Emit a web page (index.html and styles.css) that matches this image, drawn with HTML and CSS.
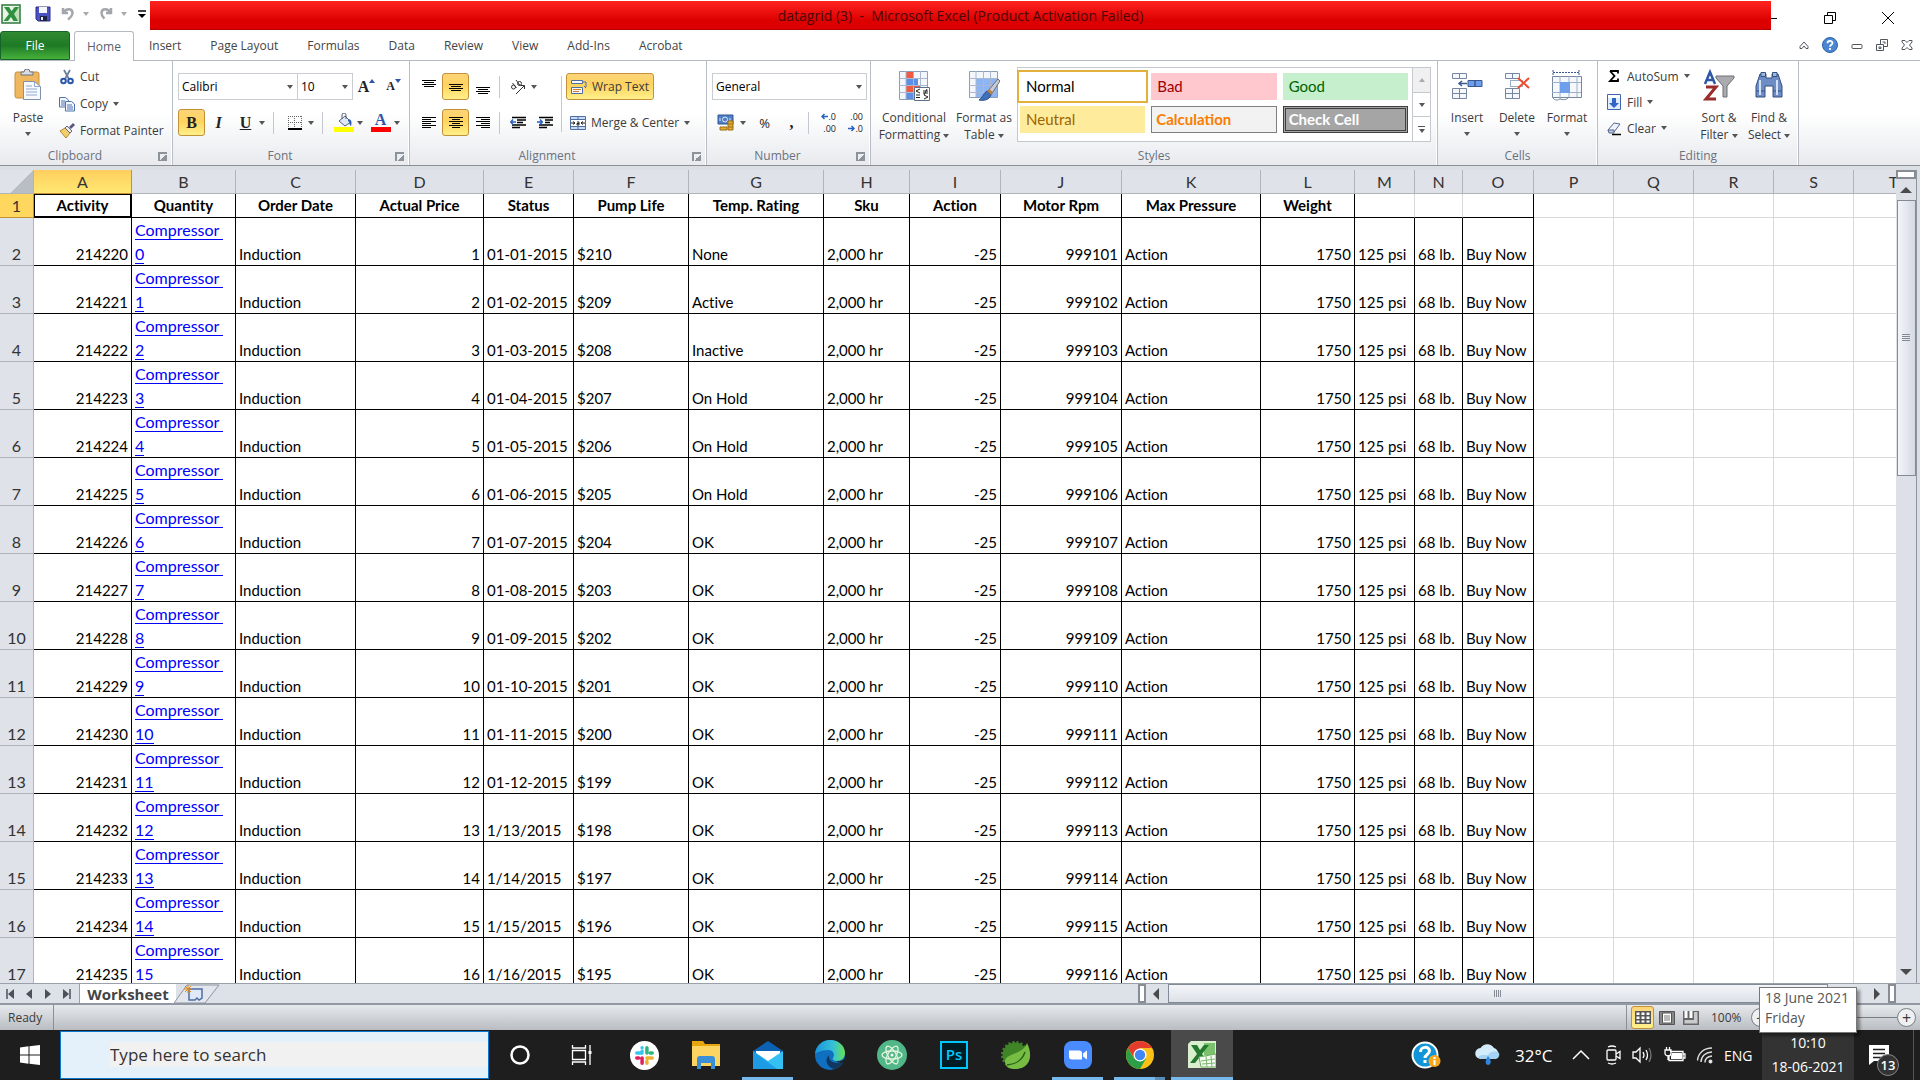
FILE: index.html
```html
<!DOCTYPE html>
<html lang="en">
<head>
<meta charset="utf-8">
<title>datagrid (3) - Microsoft Excel</title>
<link rel="stylesheet" href="styles.css">
</head>
<body>
<header class="titlebar">
  <div class="quick">
    <svg width="20" height="20" viewBox="0 0 20 20"><rect x="1" y="1" width="18" height="18" fill="#e9f4e6" stroke="#2c7a3c" stroke-width="1.5"/><path d="M12 3h6v14h-6z" fill="#bfe0b8"/><path d="M3 3h5l2.500 4L14 3h4l-5 7 4 7h-4.500L10 13l-3 4H2.500L8 10z" fill="#2f9140"/></svg>
    <span class="qsep"></span>
    <button class="plain" aria-label="Save"><svg width="16" height="16" viewBox="0 0 16 16"><path d="M1 1h14v14H3l-2-2z" fill="#4b53c4" stroke="#2a2f84"/><path d="M4 1h8v6H4z" fill="#f4f6fc"/><path d="M5 10h7v5H5z" fill="#1e2247"/><path d="M6 11h2v3H6z" fill="#e8ebf5"/></svg></button>
    <button class="plain" aria-label="Undo"><svg width="16" height="16" viewBox="0 0 16 16" fill="none" stroke="#a3a6ab" stroke-width="2.500"><path d="M3 2v5h5M3.500 6.500C6 2 12 2 12.500 6.500c.3 3-2 5-4.500 7"/></svg></button>
    <span class="caret pale"></span>
    <button class="plain" aria-label="Redo"><svg width="16" height="16" viewBox="0 0 16 16" fill="none" stroke="#a3a6ab" stroke-width="2.500"><path d="M13 2v5H8M12.500 6.500C10 2 4 2 3.500 6.500c-.3 3 1 4 3 6"/></svg></button>
    <span class="caret pale"></span>
    <span class="qsep"></span>
    <button class="plain more" aria-label="Customize toolbar"><svg width="8" height="8" viewBox="0 0 8 8"><path d="M0 1h8" stroke="#000" stroke-width="1.500"/><path d="M0 4h8L4 8z"/></svg></button>
  </div>
  <h1 class="title">datagrid (3) &nbsp;-&nbsp; Microsoft Excel (Product Activation Failed)</h1>
  <div class="winbtns">
    <button class="plain" aria-label="Minimize"><svg width="6" height="12" viewBox="0 0 6 12"><path d="M0 6.500h6" stroke="#000"/></svg></button>
    <button class="plain" aria-label="Restore"><svg width="12" height="12" viewBox="0 0 12 12" fill="none" stroke="#000"><path d="M.5 3.500h8v8h-8zM3.500 3V.5h8v8H9"/></svg></button>
    <button class="plain" aria-label="Close"><svg width="12" height="12" viewBox="0 0 12 12" stroke="#000" fill="none"><path d="M0 0l12 12M12 0L0 12"/></svg></button>
  </div>
</header>
<nav class="tabs">
  <button class="file">File</button>
  <button class="tab on">Home</button><button class="tab">Insert</button><button class="tab">Page Layout</button><button class="tab">Formulas</button><button class="tab">Data</button><button class="tab">Review</button><button class="tab">View</button><button class="tab">Add-Ins</button><button class="tab">Acrobat</button>
  <div class="tabtools">
    <button class="plain" aria-label="Collapse ribbon"><svg width="10" height="10" viewBox="0 0 10 10" fill="none" stroke="#50565e"><path d="M1 6.500L5 2l4 4.500v2H7L5 6 3 8.500H1z"/></svg></button>
    <button class="plain" aria-label="Help"><svg width="16" height="16" viewBox="0 0 16 16"><circle cx="8" cy="8" r="7.500" fill="#4a86d2" stroke="#2d62a8"/><path d="M5.500 6.200C5.500 3.300 10.500 3.300 10.500 6c0 1.700-2.500 1.900-2.500 3.800M8 11v2" fill="none" stroke="#fff" stroke-width="1.800"/></svg></button>
    <button class="plain" aria-label="Minimize workbook"><svg width="12" height="12" viewBox="0 0 12 12"><rect x="1" y="5.500" width="10" height="4" rx="1" fill="none" stroke="#50565e"/></svg></button>
    <button class="plain" aria-label="Restore workbook"><svg width="12" height="12" viewBox="0 0 12 12" fill="none" stroke="#50565e"><path d="M.5 5.500h7v6h-7zM3 8h2v1.500H3zM4.500 5V.5h7v7H8M6.500 3h2.500v2"/></svg></button>
    <button class="plain" aria-label="Close workbook"><svg width="12" height="12" viewBox="0 0 12 12" fill="none" stroke="#50565e"><path d="M1 1.500h3l2 2 2-2h3v1.500L8.500 6 11 9v1.500H8l-2-2-2 2H1V9l2.500-3L1 3z"/></svg></button>
  </div>
</nav>
<section class="ribbon">
  <div class="group clip">
    <div class="body">
      <button class="big"><svg width="32" height="32" viewBox="0 0 32 32"><rect x="3" y="3" width="24" height="26" rx="2" fill="#efb75f" stroke="#c98f3a"/><path d="M9 6h12V3h-3a3 3 0 00-6 0H9z" fill="#d9dde2" stroke="#6b737c"/><path d="M11.500 12.500h11l6 5v13h-17z" fill="#f6f9fe" stroke="#8091ab"/><path d="M22.500 12.500v5h6M14 17h6M14 20h11M14 23h11M14 26h11" fill="none" stroke="#8fa8cf"/></svg><span>Paste</span><span class="caret"></span></button>
      <div class="stack wide">
        <button class="small"><svg width="16" height="16" viewBox="0 0 16 16" fill="none"><path d="M5 1l5 9M11 1L6 10" stroke="#6d7f9c" stroke-width="1.800"/><circle cx="4.500" cy="12" r="2.300" stroke="#2856a8" stroke-width="2"/><circle cx="11.500" cy="12" r="2.300" stroke="#2856a8" stroke-width="2"/></svg>Cut</button>
        <button class="small"><svg width="16" height="16" viewBox="0 0 16 16" fill="#f3f7fd" stroke="#4f72ae"><path d="M.5 1.500h6l3 2.500v7h-9z"/><path d="M2 5h4M2 7h4M2 9h4"/><path d="M6.500 5.500h6l3 2.500v7h-9zM8 9h5M8 11h6M8 13h6"/></svg>Copy<span class="caret"></span></button>
        <button class="small"><svg width="16" height="16" viewBox="0 0 16 16"><path d="M1 8l5-3 5 5-4 5z" fill="#f2cf6b" stroke="#b08a30"/><path d="M6 5l2-2 5 5-2 2z" fill="#e9edf3" stroke="#667"/><path d="M10 4l4-4 2 2-4 4z" fill="#5a5582"/></svg>Format Painter</button>
      </div>
    </div>
    <h2 class="withlaunch">Clipboard</h2><span class="launch"></span>
  </div>
  <div class="group fontg">
    <div class="body rows">
      <div class="row">
        <span class="pick fname"><select aria-label="Font"><option>Calibri</option></select><span class="caret"></span></span><span class="pick fsize"><select aria-label="Font size"><option>10</option></select><span class="caret"></span></span>
        <button class="ib" aria-label="Grow font"><span class="serif">A</span><span class="sup up"></span></button>
        <button class="ib" aria-label="Shrink font"><span class="serif sm">A</span><span class="sup dn"></span></button>
      </div>
      <div class="row">
        <button class="ib on serif">B</button>
        <button class="ib serif"><i>I</i></button>
        <button class="ib serif"><u>U</u></button><span class="caret"></span>
        <span class="vsep"></span>
        <button class="ib" aria-label="Borders"><svg width="14" height="14" viewBox="0 0 14 14" fill="none" stroke="#666" stroke-dasharray="1 1"><path d="M.5 0v12M6.500 0v12M13.500 0v12M0 .5h14M0 6.500h14"/><path d="M0 13h14" stroke="#000" stroke-width="2" stroke-dasharray="none"/></svg></button><span class="caret"></span>
        <span class="vsep"></span>
        <button class="ib" aria-label="Fill color"><svg width="20" height="20" viewBox="0 0 20 20"><path d="M5 8l6-5 6 6-6 4z" fill="#dfe8f6" stroke="#53627c"/><path d="M8 6V2a2 2 0 014 0v4" fill="none" stroke="#53627c"/><path d="M14 6c4 0 4 4 3 7-2-1-1-4-3-5z" fill="#2b5fb4"/><path d="M0 14h20v5H0z" fill="#ff0"/></svg></button><span class="caret gap"></span>
        <button class="ib" aria-label="Font color"><span class="fcolor">A</span></button><span class="caret"></span>
      </div>
    </div>
    <h2 class="withlaunch">Font</h2><span class="launch"></span>
  </div>
  <div class="group align">
    <div class="body">
      <div class="rows">
        <div class="row">
          <button class="ib" aria-label="Top align"><svg width="14" height="14" viewBox="0 0 14 14" stroke="#000"><path d="M0 .5h14M2 2.500h10M0 4.500h14M2 6.500h10"/></svg></button>
          <button class="ib on" aria-label="Middle align"><svg width="14" height="14" viewBox="0 0 14 14" stroke="#000"><path d="M0 4.500h14M2 6.500h10M0 8.500h14M2 10.500h10"/></svg></button>
          <button class="ib" aria-label="Bottom align"><svg width="14" height="14" viewBox="0 0 14 14" stroke="#000"><path d="M0 7.500h14M2 9.500h10M0 11.500h14M2 13.500h10"/></svg></button>
          <span class="vsep tight"></span>
          <button class="ib" aria-label="Orientation"><svg width="16" height="16" viewBox="0 0 16 16" fill="none" stroke="#333"><circle cx="3.500" cy="8" r="2"/><path d="M2.500 4l4 5M6 1l4.500 6M6 15l8-8M11 6.500h3.500V10"/><circle cx="9.500" cy="4.500" r="2"/></svg></button><span class="caret"></span>
        </div>
        <div class="row">
          <button class="ib" aria-label="Align left"><svg width="14" height="14" viewBox="0 0 14 14" stroke="#000"><path d="M0 1.500h14M0 3.500h9M0 5.500h14M0 7.500h9M0 9.500h14M0 11.500h9"/></svg></button>
          <button class="ib on" aria-label="Center"><svg width="14" height="14" viewBox="0 0 14 14" stroke="#000"><path d="M0 1.500h14M3 3.500h8M0 5.500h14M3 7.500h8M0 9.500h14M3 11.500h8"/></svg></button>
          <button class="ib" aria-label="Align right"><svg width="14" height="14" viewBox="0 0 14 14" stroke="#000"><path d="M0 1.500h14M5 3.500h9M0 5.500h14M5 7.500h9M0 9.500h14M5 11.500h9"/></svg></button>
          <span class="vsep tight"></span>
          <button class="ib" aria-label="Decrease indent"><svg width="16" height="14" viewBox="0 0 16 14" stroke="#000" fill="none"><path d="M2 1.500h14M7 4h9M7 6.500h6M2 9h14M2 11.500h8" stroke-width="1.500"/><path d="M6 6H1M3 3.500L.7 6 3 8.500" stroke="#2860c0" stroke-width="1.500"/></svg></button>
          <button class="ib" aria-label="Increase indent"><svg width="16" height="14" viewBox="0 0 16 14" stroke="#000" fill="none"><path d="M2 1.500h14M8 4h8M8 6.500h5M2 9h14M2 11.500h8" stroke-width="1.500"/><path d="M0 6h5M3 3.500L5.300 6 3 8.500" stroke="#2860c0" stroke-width="1.500"/></svg></button>
        </div>
      </div>
      <span class="vsep tall"></span>
      <div class="rows">
        <button class="small on"><svg width="16" height="16" viewBox="0 0 16 16"><path d="M.5 1.500h11v3H.5zM.5 8.500h11v6H.5z" fill="#f8fafd" stroke="#4e6da1"/><path d="M2 10.500h8M2 12.500h6" stroke="#d07a2c"/><path d="M12 3h3v5M13 7l2 2" fill="none" stroke="#4e6da1"/></svg>Wrap Text</button>
        <button class="small"><svg width="16" height="16" viewBox="0 0 16 16"><path d="M.5 1.500h15v13H.5z" fill="#c8daf3" stroke="#4e6da1"/><path d="M1 5h14v6H1z" fill="#fff"/><path d="M1 4.500h14M1 11.500h14M8 2v2M8 12v2" stroke="#4e6da1"/><path d="M1 8h4M3 6.500L5 8 3 9.500M15 8h-4M13 6.500L11 8l2 1.500M7 7h2v3H7V8.500h2" fill="none" stroke="#222"/></svg>Merge &amp; Center<span class="caret"></span></button>
      </div>
    </div>
    <h2 class="withlaunch">Alignment</h2><span class="launch"></span>
  </div>
  <div class="group number">
    <div class="body rows">
      <div class="row"><span class="pick fmt"><select aria-label="Number format"><option>General</option></select><span class="caret"></span></span></div>
      <div class="row">
        <button class="ib" aria-label="Accounting format"><svg width="18" height="18" viewBox="0 0 18 18"><path d="M1 1h15v9H1z" fill="#4f7fc4" stroke="#2f5795"/><circle cx="8" cy="5.500" r="2.500" fill="none" stroke="#dbe8f8"/><path d="M3 4v3M13 4v3" stroke="#dbe8f8"/><path d="M11 7h5v9h-5zM3 13h7v3H3z" fill="#e3ac36" stroke="#9a6f16"/><path d="M11 10h5M11 13h5" stroke="#9a6f16"/></svg></button><span class="caret"></span>
        <button class="ib pct">%</button>
        <button class="ib serif">,</button>
        <span class="vsep tight"></span>
        <button class="ib dec" aria-label="Increase decimal"><span><svg width="7" height="7" viewBox="0 0 7 7"><path d="M7 3.500H1M3.500 1L1 3.500 3.500 6" fill="none" stroke="#2860c0" stroke-width="1.500"/></svg>.0</span><span>.00</span></button>
        <button class="ib dec" aria-label="Decrease decimal"><span>.00</span><span><svg width="7" height="7" viewBox="0 0 7 7"><path d="M0 3.500h6M3.500 1L6 3.500 3.500 6" fill="none" stroke="#2860c0" stroke-width="1.500"/></svg>.0</span></button>
      </div>
    </div>
    <h2 class="withlaunch">Number</h2><span class="launch"></span>
  </div>
  <div class="group styles">
    <div class="body">
      <button class="big w76"><svg width="32" height="32" viewBox="0 0 32 32"><path d="M1.500 2.500h28v28h-28z" fill="#f3f6fb" stroke="#8b9dbb"/><path d="M8 3h7v6H8zM8 17h14v6H8z" fill="#ef5a41"/><path d="M8 10h12v6H8zM8 24h7v6H8z" fill="#5d8fe6"/><path d="M8 2v28M15.500 2v28M22.500 2v28M1 9.500h28M1 16.500h28M1 23.500h28" stroke="#a9b8d0"/><path d="M16.500 18.500h15v13h-15z" fill="#fff" stroke="#5e6f8c"/><path d="M22 20l-4 2 4 2M18 26h4M18 28.500h4M25 22h5M25 24h5M29 20l-3 6M26 26l4 2-4 2" fill="none" stroke="#222"/></svg><span>Conditional</span><span>Formatting <i class="caret"></i></span></button>
      <button class="big w64"><svg width="32" height="32" viewBox="0 0 32 32"><path d="M1.500 2.500h28v26h-28z" fill="#f3f6fb" stroke="#8b9dbb"/><path d="M8 9h21v19H8z" fill="#8db4f3"/><path d="M8 2v26M15.500 2v26M22.500 2v26M1 9.500h28M1 16.500h28M1 23.500h28" stroke="#a9b8d0"/><path d="M30 10l2 2-9 14-4-3z" fill="#c9ccd2" stroke="#6b7078"/><path d="M19 22l4 4c-2 5-7 6-12 5 4-2 4-7 8-9z" fill="#3e70bd" stroke="#2a4f8a"/><path d="M21 20l4 3-2 3-4-4z" fill="#b58148"/></svg><span>Format as</span><span>Table <i class="caret"></i></span></button>
      <div class="gallery">
        <div class="swatches">
          <button class="sw normal">Normal</button><button class="sw bad">Bad</button><button class="sw good">Good</button>
          <button class="sw neutral">Neutral</button><button class="sw calc">Calculation</button><button class="sw check">Check Cell</button>
        </div>
        <div class="scroller"><button class="dim" aria-label="Up"><span class="caret flip pale"></span></button><button aria-label="Down"><span class="caret"></span></button><button class="bar" aria-label="More styles"><span class="caret"></span></button></div>
      </div>
    </div>
    <h2>Styles</h2>
  </div>
  <div class="group cells">
    <div class="body">
      <button class="big w50"><svg width="32" height="32" viewBox="0 0 32 32"><g fill="#f5f8fc" stroke="#76879f"><path d="M1.500 4.500h14v5h-14zM8.500 4.500v5M1.500 19.500h14v10h-14zM8.500 19.500v10M1.500 24.500h14"/></g><path d="M17 11.500h14v6H17z" fill="#6f9eea" stroke="#39588f"/><path d="M24 12v5M16 14.500H8M11 12l-3 2.500 3 2.500" fill="none" stroke="#39588f" stroke-width="1.500"/></svg><span>Insert</span><span class="caret"></span></button>
      <button class="big w50"><svg width="32" height="32" viewBox="0 0 32 32"><g fill="#f5f8fc" stroke="#76879f"><path d="M4.500 4.500h14v5h-14zM11.500 4.500v5M4.500 19.500h14v10h-14zM11.500 19.500v10M4.500 24.500h14"/></g><path d="M9.500 11.500h12v6h-12z" fill="none" stroke="#39588f" stroke-dasharray="1 1"/><path d="M17 9l11 10M28 9L17 19" stroke="#ee4a2b" stroke-width="2"/></svg><span>Delete</span><span class="caret"></span></button>
      <button class="big w50"><svg width="32" height="32" viewBox="0 0 32 32"><path d="M1.500 7.500h29v21h-29z" fill="#f5f8fc" stroke="#76879f"/><path d="M9 7v23M18 7v21M26 7v21M1 13.500h29M1 23.500h29" stroke="#9fb0c9"/><path d="M9 13h10v11H9z" fill="#6f9eea"/><path d="M2 3.500h26M2 1v5M28 1v5" stroke="#39588f" stroke-dasharray="2 1"/><path d="M2 29c2 3 5 2 7 1 3 1 6 1 8-1" fill="none" stroke="#76879f"/></svg><span>Format</span><span class="caret"></span></button>
    </div>
    <h2>Cells</h2>
  </div>
  <div class="group editing">
    <div class="body">
      <div class="stack">
        <button class="small"><svg width="16" height="16" viewBox="0 0 16 16"><path d="M4 3h8v2.500M4 3l4.500 5L4 13h8v-2.500" fill="none" stroke="#000" stroke-width="1.800"/></svg>AutoSum<span class="caret"></span></button>
        <button class="small"><svg width="16" height="16" viewBox="0 0 16 16"><path d="M1.500.5h13v15h-13z" fill="#e2ecfb" stroke="#3f67b0"/><path d="M2 1h12v3H2z" fill="#fff"/><path d="M6 4h4v5h3l-5 5-5-5h3z" fill="#2f66c8"/></svg>Fill<span class="caret"></span></button>
        <button class="small"><svg width="16" height="16" viewBox="0 0 16 16"><path d="M2 10l6-7 6 1-6 8H3z" fill="#eef2fa" stroke="#56698c"/><path d="M2 10l6 0v3H3z" fill="#b9c9e6" stroke="#56698c"/><path d="M6 14.500h9" stroke="#000" stroke-width="1.500"/></svg>Clear<span class="caret"></span></button>
      </div>
      <button class="big w50"><svg width="32" height="32" viewBox="0 0 32 32"><path d="M13 7h18v2l-7 8v11h-4V17l-7-8z" fill="#a9abae" stroke="#6d7074"/><path d="M2 15L7 3l5 12M4 11h6" fill="none" stroke="#2d57a6" stroke-width="2.500"/><path d="M3 18h10L3 30h10" fill="none" stroke="#9a2c2c" stroke-width="3"/></svg><span>Sort &amp;</span><span>Filter <i class="caret"></i></span></button>
      <button class="big w50"><svg width="32" height="32" viewBox="0 0 32 32"><path d="M7 5h6v4h6V5h6l4 12v11h-9V17h-8v11H3V17z" fill="#6d8dc4" stroke="#33507f"/><path d="M8 3.500h4.500v4H8zM19.500 3.500H24v4h-4.500zM3.500 22h8M20.500 22h8" fill="#9db7e0" stroke="#33507f"/><path d="M7 11v15M24 11v15" stroke="#d3e1f6" stroke-width="2"/></svg><span>Find &amp;</span><span>Select <i class="caret"></i></span></button>
    </div>
    <h2>Editing</h2>
  </div>
</section>
<main class="sheetarea">
  <div class="grid">
    <table class="sheet">
      <colgroup><col class="c34"><col class="c98"><col class="c104"><col class="c120"><col class="c128"><col class="c90"><col class="c115"><col class="c135"><col class="c86"><col class="c91"><col class="c121"><col class="c139"><col class="c94"><col class="c60"><col class="c48"><col class="c71"><col class="c80"><col class="c80"><col class="c80"><col class="c80"><col class="c80"></colgroup>
      <thead id="letters"></thead>
      <tbody id="rows"></tbody>
    </table>
  </div>
  <div class="vscroll">
    <span class="split"></span><span class="tri up"></span><span class="thumb"><i></i></span><span class="space"></span><span class="tri down"></span>
  </div>
</main>
<div class="sheetbar">
  <div class="navs">
    <button class="plain" aria-label="First sheet"><svg width="8" height="10" viewBox="0 0 8 10"><path d="M1 0v10" stroke="#4b5158" stroke-width="1.500"/><path d="M8 0v10L2 5z" fill="#4b5158"/></svg></button>
    <button class="plain" aria-label="Previous sheet"><svg width="8" height="10" viewBox="0 0 8 10"><path d="M7 0v10L1 5z" fill="#4b5158"/></svg></button>
    <button class="plain" aria-label="Next sheet"><svg width="8" height="10" viewBox="0 0 8 10"><path d="M1 0v10l6-5z" fill="#4b5158"/></svg></button>
    <button class="plain" aria-label="Last sheet"><svg width="8" height="10" viewBox="0 0 8 10"><path d="M7 0v10" stroke="#4b5158" stroke-width="1.500"/><path d="M0 0v10l6-5z" fill="#4b5158"/></svg></button>
  </div>
  <button class="wtab">Worksheet</button>
  <button class="plain newtab" aria-label="Insert worksheet"><svg width="48" height="20" viewBox="0 0 48 20"><path d="M0 19L13 1h32L31 19z" fill="#e3e7ed" stroke="#8d959f"/><path d="M15 5h13v9l-3 2-2-2-2 2h-6z" fill="#dfe9f8" stroke="#4e6da1" stroke-width="1.500"/><path d="M14 1v8M10 5h8M11 2l6 6M17 2l-6 6" stroke="#e08a1e"/></svg></button>
  <div class="hscroll"><span class="hsplit"></span><span class="tri left"></span><span class="hthumb"><i></i></span><span class="tri right"></span><span class="hsplit"></span></div>
</div>
<footer class="status">
  <span class="ready">Ready</span>
  <div class="views">
    <button class="vb on" aria-label="Normal view"><svg width="16" height="13" viewBox="0 0 16 13"><path d="M0 0h16v13H0z" fill="#555"/><path d="M1.500 1.500h3v2.500h-3zM6.500 1.500h3v2.500h-3zM11.500 1.500h3v2.500h-3zM1.500 5.500h3v2.500h-3zM6.500 5.500h3v2.500h-3zM11.500 5.500h3v2.500h-3zM1.500 9.500h3v2h-3zM6.500 9.500h3v2h-3zM11.500 9.500h3v2h-3z" fill="#fff"/></svg></button>
    <button class="vb" aria-label="Page layout view"><svg width="16" height="14" viewBox="0 0 16 14"><path d="M.5.5h15v13H.5z" fill="#888" stroke="#555"/><path d="M3.500 2h9v10h-9z" fill="#fff" stroke="#555"/><path d="M5 5h6M5 7h6M5 9h6" stroke="#777"/></svg></button>
    <button class="vb" aria-label="Page break view"><svg width="16" height="14" viewBox="0 0 16 14"><path d="M0 0h16v14H0z" fill="#666"/><path d="M1.500 0v7h3V0zM6.500 0v7h3V0z" fill="#fff"/><path d="M11 1h3.500v11.500h-13V9H11z" fill="#c8cacc"/></svg></button>
    <span class="pctz">100%</span>
    <div class="zoombar"><button class="zb" aria-label="Zoom out">−</button><span class="zline"></span><button class="zb" aria-label="Zoom in">+</button></div>
  </div>
</footer>
<div class="taskbar">
  <button class="plain start" aria-label="Start"><svg width="20" height="20" viewBox="0 0 20 20" fill="#fff"><path d="M0 2.500L8.500 1.300V9.500H0zM9.500 1.200L20 0v9.500H9.500zM0 10.500h8.500v8.200L0 17.500zM9.500 10.500H20V20L9.500 18.800z"/></svg></button>
  <div class="search"><input type="text" aria-label="Search" placeholder="Type here to search"></div>
  <div class="apps">
    <button aria-label="Cortana"><svg width="22" height="22" viewBox="0 0 22 22"><circle cx="11" cy="11" r="8.500" fill="none" stroke="#fff" stroke-width="2.500"/></svg></button>
    <button aria-label="Task view"><svg width="22" height="22" viewBox="0 0 22 22" fill="none" stroke="#fff" stroke-width="1.300"><path d="M1.500 6.500h13v9h-13zM1.500 1v3h13V1M1.500 21v-3h13v3M19 1v20"/><path d="M17.500 7h3v3h-3z" fill="#fff" stroke="none"/></svg></button>
    <button aria-label="Slack"><svg width="29" height="29" viewBox="0 0 30 30"><circle cx="15" cy="15" r="15" fill="#fff"/><g stroke-width="3.600" stroke-linecap="round"><path d="M12.500 7v.1M12.500 10.500v.1M7 12.500h5.500" stroke="#36c5f0"/><path d="M17.500 7v5.500M21 12.500h2" stroke="#2eb67d"/><path d="M17.500 17.500H23M17.500 21v2" stroke="#ecb22e"/><path d="M12.500 17.500V23M7 17.500h2" stroke="#e01e5a"/></g></svg></button>
    <button aria-label="File Explorer"><svg width="28" height="28" viewBox="0 0 28 28"><path d="M0 0h11l2 3h15v22H0z" fill="#e5a50f"/><path d="M0 5h28v20H0z" fill="#fcd462"/><path d="M5 28V18a3 3 0 013-3h12a3 3 0 013 3v10h-4v-6H9v6z" fill="#3b8fd6"/></svg></button>
    <button class="run" aria-label="Mail"><svg width="30" height="28" viewBox="0 0 30 28"><path d="M0 10L15 0l15 10v4H0z" fill="#0b62b4"/><path d="M3 10h24v12H3z" fill="#fff"/><path d="M0 10l15 10 15-10v18H0z" fill="#35c0f4"/><path d="M0 28V10l24 18z" fill="#1d9be4"/></svg></button>
    <button aria-label="Edge"><svg width="30" height="30" viewBox="0 0 30 30"><defs><linearGradient id="eg"><stop offset="0" stop-color="#1c93dc"/><stop offset=".6" stop-color="#35c1d8"/><stop offset="1" stop-color="#68e052"/></linearGradient></defs><circle cx="15" cy="15" r="15" fill="#0f6fc0"/><path d="M0 14C1 5 8 0 15 0c9 0 15 6 15 13 0 5-4 8-8 8-3 0-5-1-4-3 2-3 1-8-5-8C6 10 1 13 0 14z" fill="url(#eg)"/><path d="M14 15c-1 5 4 10 14 7l1-1c1-1-4 7-10 8-7-2-10-9-5-14z" fill="#12375f"/><path d="M30 15c0 6-5 7-9 6 2 2 5 2 8 1z" fill="#1e1e1e"/></svg></button>
    <button aria-label="Atom"><svg width="30" height="30" viewBox="0 0 30 30"><circle cx="15" cy="15" r="15" fill="#52b788"/><g fill="none" stroke="#e5f5dd" stroke-width="1.300"><ellipse cx="15" cy="15" rx="10" ry="4"/><ellipse cx="15" cy="15" rx="10" ry="4" transform="rotate(60 15 15)"/><ellipse cx="15" cy="15" rx="10" ry="4" transform="rotate(120 15 15)"/></g><circle cx="15" cy="15" r="1.500" fill="#fff"/></svg></button>
    <button aria-label="Photoshop"><span class="ps">Ps</span></button>
    <button aria-label="Spring"><svg width="30" height="30" viewBox="0 0 30 30"><circle cx="14" cy="15" r="12.500" fill="#3f8427" stroke="#3f8427" stroke-width="3" stroke-dasharray="2 2"/><path d="M26 3c6 12 4 26-12 26-4 0-8-1-9-4C-1 13 22 16 26 3z" fill="#77bd43"/><path d="M6 25c9-1 15-4 18-13" fill="none" stroke="#285f18" stroke-width="1.500"/></svg></button>
    <button class="run" aria-label="Zoom"><svg width="28" height="28" viewBox="0 0 28 28"><rect width="28" height="28" rx="8" fill="#4a8cff"/><path d="M5 9.500h10a3 3 0 013 3v6H8a3 3 0 01-3-3zM19 12.500l4-3v9l-4-3z" fill="#fff"/></svg></button>
    <button class="run two" aria-label="Chrome"><svg width="28" height="28" viewBox="0 0 28 28"><circle cx="14" cy="14" r="14" fill="#fbc116"/><path d="M1.900 7A14 14 0 0126.100 7H14l-6 10z" fill="#e33b2e"/><path d="M1.900 7A14 14 0 0014 28l6-10.500-12 0z" fill="#2b9e48"/><circle cx="14" cy="14" r="6.500" fill="#fff"/><circle cx="14" cy="14" r="5.200" fill="#4285f4"/></svg></button>
    <button class="run cur" aria-label="Excel"><svg width="28" height="28" viewBox="0 0 28 28"><path d="M0 3l3-3h25v27H0z" fill="#d9efcf"/><path d="M16 2h11v12H16z" fill="#7cc26e"/><path d="M3 4h6l3 5 4-5h5l-7 9 6 9h-6l-3-5-4 5H2l7-9z" fill="#24792f"/><path d="M11 16l17-3v13H13z" fill="#f4faf1" stroke="#6fae62"/><path d="M13 20l14-2M14 23l13-1M18 15l1 11M23 15l1 11" stroke="#7cb870"/></svg></button>
  </div>
  <div class="tray">
    <svg width="30" height="28" viewBox="0 0 30 28"><circle cx="14" cy="14" r="12.500" fill="#1295d8" stroke="#fff" stroke-width="2"/><path d="M9.500 11c0-6 9-6 9-1 0 3.500-4.500 3.500-4.500 7M14 19v3" fill="none" stroke="#fff" stroke-width="3"/><circle cx="23.500" cy="20" r="6" fill="#f6a81c"/><path d="M23.500 16v2M23.500 19v5" stroke="#fff" stroke-width="2"/></svg>
    <svg class="weather" width="26" height="22" viewBox="0 0 26 22"><path d="M6 15a5.500 5.500 0 01-.5-11A8 8 0 0119 4a6 6 0 011 11z" fill="#d3ecfc"/><path d="M3 13c5-4 9 0 11-3s8-3 10-1c1 3-1 6-4 6H6z" fill="#a5d2f5"/><path d="M13 12c5 6 2 9 0 9s-4-3 0-9z" fill="#2f86dc"/></svg>
    <span class="temp">32°C</span>
    <svg class="chev" width="18" height="12" viewBox="0 0 18 12"><path d="M1 10l8-8 8 8" fill="none" stroke="#fff" stroke-width="1.500"/></svg>
    <svg class="sys" width="16" height="20" viewBox="0 0 16 20" fill="none" stroke="#fff" stroke-width="1.300"><rect x="1" y="5" width="9" height="10" rx="1"/><path d="M10 9l4-2.500v7L10 11M2 2q4-2 8 0M2 18q4 2 8 0"/></svg>
    <svg class="sys" width="22" height="20" viewBox="0 0 22 20" fill="none" stroke="#fff" stroke-width="1.300"><path d="M1 7h3l4-4v14l-4-4H1zM11 7q2 3 0 6M14 5q3 5 0 10"/><path d="M17 3q4 7 0 14" stroke="#777"/></svg>
    <svg class="sys" width="22" height="16" viewBox="0 0 22 16" fill="none" stroke="#fff" stroke-width="1.300"><path d="M6 4.500h13v9H5V9M19.500 7h1.500v4h-1.500M1 3h6v3a2 2 0 01-6 0zM2.500 0v3M5.500 0v3M4 8v5"/><path d="M8 6h10v6H7V9z" fill="#fff" stroke="none"/></svg>
    <svg class="sys" width="18" height="18" viewBox="0 0 18 18" fill="none" stroke="#ddd" stroke-width="1.400"><path d="M1.500 14.500C2 7 8 2 16 2M5 16c0-6 5-10 11-10M9 16.500c0-4 3-6 7-6.500"/><circle cx="14.500" cy="15.500" r="1.300" fill="#fff"/></svg>
    <span class="eng">ENG</span>
    <button class="clock"><span>10:10</span><span>18-06-2021</span><span class="tip" role="tooltip">18 June 2021<br>Friday</span></button>
    <button class="notes" aria-label="Notifications"><svg width="22" height="20" viewBox="0 0 22 20"><path d="M0 0h20v16H5l-5 4z" fill="#fff"/><path d="M4 4.500h12M4 8.500h12M4 12.500h8" stroke="#1e1e1e" stroke-width="1.500"/></svg><span class="badge">13</span></button>
  </div>
</div>
<script src="sheet.js"></script>
</body>
</html>
```
FILE: sheet.js
```
const titles = ["Activity", "Quantity", "Order Date", "Actual Price", "Status", "Pump Life", "Temp. Rating", "Sku", "Action", "Motor Rpm", "Max Pressure", "Weight", "", "", ""];
const ratings = ["None", "Active", "Inactive", "On Hold", "On Hold", "On Hold"];
const rightCols = [0, 3, 8, 9, 11];

const letters = "ABCDEFGHIJKLMNOPQRST".split("");
document.getElementById("letters").innerHTML =
  '<tr><th class="corner"></th>' +
  letters.map((l, i) => `<th scope="col"${i === 0 ? ' class="sel"' : ""}>${l}</th>`).join("") + "</tr>";

const blanks = "<td></td>".repeat(5);
let html = '<tr class="first"><th scope="row" class="sel">1</th>' +
  titles.map((t, i) => `<td class="${i === 0 ? "d active" : i < 12 || i === 14 ? "d" : "under"}">${t}</td>`).join("") +
  blanks + "</tr>";

for (let i = 0; i < 16; i++) {
  const n = i + 1;
  const date = n < 13 ? `01-${String(n).padStart(2, "0")}-2015` : `1/${n}/2015`;
  const cells = [214220 + i, `<a href="#"><span>Compressor&nbsp;</span><span>${i}</span></a>`, "Induction", n, date,
    "$" + (210 - i), ratings[i] || "OK", "2,000 hr", "-25", 999101 + i, "Action", 1750, "125 psi", "68 lb.", "Buy Now"];
  html += `<tr><th scope="row">${i + 2}</th>` +
    cells.map((c, k) => `<td class="d${rightCols.includes(k) ? " r" : ""}">${c}</td>`).join("") + blanks + "</tr>";
}
document.getElementById("rows").innerHTML = html;
```
FILE: styles.css
```css
* { box-sizing: border-box; }
body { margin: 0; height: 100vh; display: flex; flex-direction: column; overflow: hidden; background: #fff; color: #3b3b3b; font-family: "Open Sans", "Noto Sans", sans-serif; font-size: 12px; }
button { border: 0; background: none; padding: 0; margin: 0; font: inherit; color: inherit; display: flex; align-items: center; justify-content: center; }
svg { display: block; flex: none; }
h1, h2 { margin: 0; font-weight: 400; }

/* title bar */
.titlebar { display: flex; height: 31px; flex: none; }
.quick { width: 150px; display: flex; align-items: center; gap: 7px; padding: 0 4px 4px 1px; }
.quick .qsep { width: 1px; height: 18px; background: #888; margin-left: -2px; }
.quick .plain { margin-left: 2px; }
.quick .more { margin-left: -1px; }
.title { flex: 1; height: 29px; margin-top: 1px; background: linear-gradient(#ff2420, #dc0000 70%); border-bottom: 1px solid #b40000; font-size: 14px; line-height: 29px; text-align: center; color: #4a0808; }
.winbtns { width: 149px; display: flex; align-items: center; justify-content: space-between; padding: 5px 26px 0 0; }

/* ribbon tabs */
.tabs { display: flex; height: 30px; flex: none; border-bottom: 1px solid #b5bac1; align-items: stretch; }
.file { width: 70px; margin-right: 4px; color: #fff; background: linear-gradient(#2f8a31, #1f7a26 50%, #46b03a); border: 1px solid #17642a; border-radius: 3px 3px 0 0; }
.tab { padding: 0 14px; color: #444; }
.tab + .tab { margin-left: 1px; }
.tab.on { border: 1px solid #b5bac1; border-bottom: 0; border-radius: 3px 3px 0 0; padding: 0 12px; margin-bottom: -1px; background: #fff; color: #5a5f6b; }
.tabtools { margin-left: auto; display: flex; gap: 13px; padding: 0 7px 2px 0; align-items: center; }

/* ribbon */
.ribbon { display: flex; height: 105px; flex: none; background: linear-gradient(#fff, #fff 50%, #e8eaee); border-bottom: 1px solid #8a9096; }
.group { position: relative; display: flex; flex-direction: column; border-right: 1px solid #b9bec6; box-shadow: inset -1px 0 #fff; }
.body { display: flex; height: 87px; }
.group h2 { text-align: center; font-size: 12px; line-height: 18px; color: #6a7280; }
.group .withlaunch { padding-right: 22px; }
.launch { position: absolute; right: 5px; bottom: 4px; width: 9px; height: 9px; border: solid #8d939b; border-width: 2px 0 0 2px; background: linear-gradient(135deg, transparent 50%, #8d939b 50%); }
.clip { width: 173px; } .fontg { width: 237px; } .align { width: 297px; } .number { width: 164px; } .styles { width: 567px; } .cells { width: 160px; } .editing { width: 201px; }
.caret { display: inline-block; flex: none; width: 0; height: 0; border: 3px solid transparent; border-top: 4px solid #555; border-bottom: 0; vertical-align: middle; }
.caret.flip { border-top: 0; border-bottom: 4px solid #aaa; }
.caret.pale { border-top-color: #aaa; }
.caret.flip.pale { border-bottom-color: #aaa; }
.big { flex-direction: column; justify-content: flex-start; padding-top: 8px; width: 44px; line-height: 17px; white-space: nowrap; }
.big svg { margin-bottom: 8px; }
.big > .caret { margin-top: 6px; }
.big.w76 { width: 76px; } .big.w64 { width: 64px; } .big.w50 { width: 50px; }
.clip .body { padding-left: 6px; }
.stack { display: flex; flex-direction: column; padding-top: 2px; width: 92px; }
.small { height: 26px; gap: 5px; justify-content: flex-start; white-space: nowrap; padding: 0 4px; border-radius: 3px; }
.wide .small { height: 27px; }
.on.small, .ib.on { border: 1px solid #c29138; background: linear-gradient(#fcd47a, #ffd35e 45%, #fff08a); border-radius: 3px; }
.rows { display: flex; flex-direction: column; align-items: flex-start; gap: 9px; padding-top: 12px; }
.row { display: flex; align-items: center; height: 27px; }
.rows > .small { height: 27px; }
.clip .stack { padding-left: 5px; width: 116px; }
.ib { width: 27px; height: 27px; color: #222; }
.serif { font-family: "Liberation Serif", serif; font-weight: 700; font-size: 16px; }
.serif.sm { font-size: 12px; }
.sup { border: 3px solid transparent; margin-bottom: 12px; }
.sup.up { border-top: 0; border-bottom: 4px solid #2d57a6; }
.sup.dn { border-bottom: 0; border-top: 4px solid #2d57a6; }
.fontg .body { padding-left: 5px; }
.pick { display: flex; align-items: center; height: 27px; border: 1px solid #c9ccd1; padding-right: 4px; background: #fff; }
.pick select { appearance: none; border: 0; background: none; flex: 1; min-width: 0; padding: 0 3px; font: inherit; color: #000; }
.fname { width: 120px; } .fsize { width: 55px; border-left: 0; } .fmt { width: 155px; }
.fcolor { font: 700 16px/14px "Liberation Serif", serif; color: #2d57a6; border-bottom: 5px solid #f00; width: 20px; text-align: center; }
.caret.gap { margin-right: 4px; }
.vsep { width: 1px; height: 22px; background: #c5c9cf; margin: 0 5px; }
.fontg .vsep { margin: 0 7px 0 8px; }
.vsep.tight { margin: 0 4px 0 3px; }
.vsep.tall { height: 56px; margin: 15px 4px 0 3px; }
.align .body { padding-left: 5px; }
.number .body { padding-left: 5px; }
.number .ib + .caret { margin: 0 5px 0 1px; }
.pct { font-size: 13px; }
.dec { flex-direction: column; font-size: 9px; line-height: 12px; align-items: flex-end; padding-right: 4px; }
.dec span { display: flex; align-items: center; }
.styles .body { padding-left: 5px; }
.gallery { display: flex; margin: 6px 0 0 1px; height: 75px; width: 414px; border: 1px solid #c5c9cf; background: #fff; }
.swatches { flex: 1; display: grid; grid-template-columns: 1fr 1fr 1fr; grid-template-rows: 27px 27px; gap: 6px; padding: 5px 4px 0 2px; }
.sw { justify-content: flex-start; padding: 0 0 2px 6px; font: 15px "Lato", sans-serif; }
.normal { color: #000; outline: 2px solid #e2b13c; outline-offset: 1px; background: #fff; }
.bad { background: #ffc7ce; color: #9c0006; } .good { background: #c6efce; color: #006100; } .neutral { background: #ffeb9c; color: #9c6500; }
.calc { background: #f2f2f2; color: #fa7d00; border: 1px solid #7f7f7f; font-weight: 700; padding-left: 4px; }
.check { background: #a5a5a5; color: #fff; border: 3px double #3f3f3f; font-weight: 700; padding-left: 3px; }
.scroller { width: 18px; display: flex; flex-direction: column; border-left: 1px solid #c5c9cf; }
.scroller button { flex: 1; border-bottom: 1px solid #c5c9cf; }
.scroller .dim { background: #f0f0f0; }
.scroller .bar { flex-direction: column; border-bottom: 0; gap: 2px; }
.scroller .bar::before { content: ""; width: 7px; height: 1px; background: #555; }
.cells .body { padding-left: 4px; }
.editing .body { padding-left: 4px; }

/* worksheet */
.sheetarea { flex: 1; min-height: 0; display: flex; padding: 4px 3px 0 0; background: #dbdfe4; }
.grid { flex: 1; min-width: 0; overflow: hidden; background: #fff; }
.sheet { table-layout: fixed; width: 1934px; border-collapse: separate; border-spacing: 0; font: 15px/20px "Lato", "Liberation Sans", sans-serif; font-variant-ligatures: none; color: #000; }
.c34 { width: 34px; } .c98 { width: 98px; } .c104 { width: 104px; } .c120 { width: 120px; } .c128 { width: 128px; } .c90 { width: 90px; } .c115 { width: 115px; } .c135 { width: 135px; } .c86 { width: 86px; } .c91 { width: 91px; } .c121 { width: 121px; } .c139 { width: 139px; } .c94 { width: 94px; } .c60 { width: 60px; } .c48 { width: 48px; } .c71 { width: 71px; } .c80 { width: 80px; }
.sheet th, .sheet td { padding: 0; height: 24px; overflow: hidden; white-space: nowrap; border: solid #d9d9d9; border-width: 0 1px 1px 0; }
.sheet th { font-weight: 400; font-size: 16px; color: #333; background: #dfe2e8; border-color: #b1b5ba; text-align: center; vertical-align: middle; }
.sheet .corner { background: linear-gradient(135deg, #dfe2e8 60%, #b9bec5 60%); }
.sheet .sel { background: linear-gradient(#ffce5f, #ffe972); border-color: #c29138; }
.sheet tbody .sel { background: #ffd75e; }
.sheet tbody tr { height: 48px; }
.sheet tbody .first { height: 24px; }
.sheet tbody tr:not(.first) th { vertical-align: bottom; padding-bottom: 1px; }
.sheet td { vertical-align: bottom; padding: 0 3px 1px; }
.sheet .d { border-color: #000; }
.sheet .under { border-bottom-color: #000; }
.sheet .r { text-align: right; }
.sheet .first td { text-align: center; font-weight: 700; vertical-align: middle; padding-bottom: 2px; }
.sheet .active { box-shadow: inset 0 0 0 1px #000, inset 0 0 0 2px #fff; }
.sheet a { color: #00f; text-decoration: none; font-size: 16px; }
.sheet a span { display: table; border-bottom: 1px solid #00f; line-height: 19px; }
.sheet a span + span { margin-top: 4px; }

.vscroll { width: 21px; flex: none; display: flex; flex-direction: column; align-items: center; background: #dde1e7; border-right: 1px solid #8d959f; }
.split { width: 20px; height: 9px; border: 2px solid #888d95; background: #fff; flex: none; }
.tri { width: 0; height: 0; border: 6px solid transparent; flex: none; }
.tri.up { border-top: 0; border-bottom-color: #4a4a4a; margin: 8px 0 7px; }
.tri.down { border-bottom: 0; border-top-color: #4a4a4a; margin-bottom: 8px; }
.thumb { width: 19px; flex: 0 0 34%; border: 1px solid #828b96; background: linear-gradient(90deg, #f3f5f8, #d5d9e2); display: flex; align-items: center; justify-content: center; }
.thumb i { width: 8px; height: 8px; background: repeating-linear-gradient(#848b94 0 1px, transparent 1px 2px); }
.space { flex: 1; }

/* sheet tabs */
.sheetbar { display: flex; height: 22px; flex: none; background: #dde1e8; border-top: 1px solid #9aa1ab; border-bottom: 2px solid #9299a5; padding-right: 24px; }
.navs { width: 79px; display: flex; align-items: center; justify-content: space-between; padding: 0 8px 0 6px; }
.wtab { width: 97px; background: #fff; font-weight: 700; font-size: 15px; color: #444; border-left: 1px solid #9aa1ab; }
.newtab { margin-left: -2px; }
.hscroll { width: 40%; margin-left: auto; display: flex; align-items: center; }
.hsplit { width: 8px; height: 19px; border: 2px solid #888d95; background: #fff; flex: none; }
.tri.left { border-left: 0; border-right-color: #4a4a4a; margin: 0 9px 0 7px; }
.tri.right { border-right: 0; border-left-color: #4a4a4a; margin-left: auto; margin-right: 8px; }
.hthumb { width: 660px; height: 19px; border: 1px solid #828b96; background: linear-gradient(#f3f5f8, #dde1e8); display: flex; align-items: center; justify-content: center; }
.hthumb i { width: 8px; height: 7px; background: repeating-linear-gradient(90deg, #848b94 0 1px, transparent 1px 2px); }

/* status bar */
.status { display: flex; height: 25px; flex: none; background: linear-gradient(#e6e9ec, #b9bdc2); justify-content: space-between; padding-right: 4px; }
.ready { width: 54px; padding-left: 8px; line-height: 25px; border-right: 1px solid #8b9096; }
.views { display: flex; align-items: center; gap: 1px; border-left: 1px solid #8b9096; width: 290px; padding-left: 4px; }
.vb { width: 23px; height: 23px; border-radius: 3px; }
.vb.on { background: linear-gradient(#fcd47a, #fff08a); border: 1px solid #c29138; }
.pctz { margin-left: 8px; width: 39px; }
.zoombar { flex: 1; display: flex; align-items: center; }
.zb { width: 19px; height: 19px; border: 1px solid #777d85; border-radius: 50%; background: #eef0f2; font-size: 16px; line-height: 16px; }
.zline { flex: 1; height: 1px; background: #777d85; }

/* taskbar */
.taskbar { display: flex; height: 50px; flex: none; background: #1e1e1e; color: #fff; }
.start { width: 60px; }
.search { width: 429px; margin: 1px 0; border: 1px solid #0a78d0; background: #e4f1fb; padding: 10px 0 11px 49px; display: flex; }
.search input { flex: 1; border: 0; outline: 0; padding: 0; background: #f1f1f1; font: 17px "Open Sans", sans-serif; color: #333; }
.search input::placeholder { color: #333; opacity: 1; }
.apps { display: flex; }
.apps button { width: 62px; position: relative; }
.apps .run::after { content: ""; position: absolute; bottom: 0; left: 5px; right: 6px; height: 3px; background: #76b9ed; }
.apps .two::after { background: linear-gradient(90deg, #76b9ed 80%, #5a8db5 80%); }
.apps .cur { background: #4a4a4a; }
.apps .cur::after { left: 0; right: 0; }
.ps { width: 28px; height: 28px; border: 2px solid #00c8ff; background: #001d26; color: #00c8ff; font-weight: 600; font-size: 15px; line-height: 23px; }
.tray { margin-left: auto; display: flex; align-items: center; }
.weather { margin: 0 14px 0 34px; }
.temp { font-size: 17px; width: 57px; }
.chev { margin-right: 16px; }
.sys { margin-right: 10px; }
.eng { font-size: 14px; width: 38px; }
.clock { width: 92px; height: 50px; position: relative; flex-direction: column; background: #333; font-size: 14px; line-height: 24px; }
.tip { position: absolute; left: -3px; bottom: 47px; width: 98px; height: 46px; background: #fff; border: 1px solid #777; box-shadow: 3px 3px 3px rgba(0, 0, 0, .4); color: #575757; text-align: left; padding: 0 5px; font-size: 14px; line-height: 20px; white-space: nowrap; }
.notes { width: 60px; position: relative; margin-right: 6px; height: 50px; padding-right: 8px; border-right: 1px solid #555; }
.badge { position: absolute; left: 23px; top: 24px; width: 22px; height: 22px; border: 1px solid #888; border-radius: 50%; background: #333; font-size: 13px; line-height: 20px; text-align: center; font-weight: 600; }
```
